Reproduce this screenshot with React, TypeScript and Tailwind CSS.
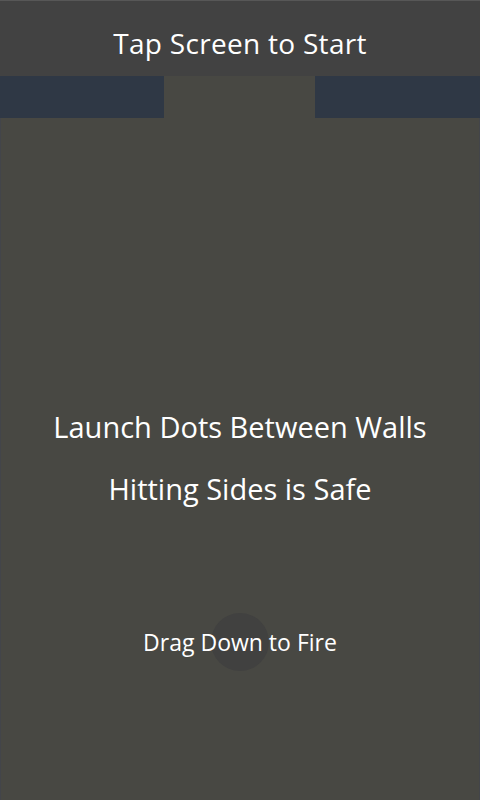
const FONT = { fontFamily: '"Open Sans", "Noto Sans", sans-serif' };

export default function App() {
  return (
    <div
      className="relative flex h-[800px] w-[480px] flex-col overflow-hidden border-t border-t-[#575757] bg-[#484843] text-white"
      style={FONT}
    >
      {/* 上部バー */}
      <header className="flex h-[75px] shrink-0 items-center justify-center bg-[#424242] pt-[9px]">
        <h1 className="text-[28px] font-normal leading-none tracking-[0.3px]">Tap Screen to Start</h1>
      </header>

      {/* 壁 */}
      <div className="flex h-[42px] shrink-0">
        <div className="w-[164px] bg-[#2f3845]" />
        <div className="flex-1" />
        <div className="w-[165px] bg-[#2f3845]" />
      </div>

      <main className="relative flex flex-1 flex-col items-center border-x border-x-[#43454a]">
        <p className="mt-[294px] text-[29px] leading-none">Launch Dots Between Walls</p>
        <p className="mt-[33px] text-[29px] leading-none">Hitting Sides is Safe</p>

        {/* 発射ドット */}
        <div className="absolute left-[210px] top-[495px] h-[58px] w-[58px] rounded-full bg-[#414140]" />

        <p className="relative mt-[128px] text-[23px] leading-none">Drag Down to Fire</p>
      </main>
    </div>
  );
}
